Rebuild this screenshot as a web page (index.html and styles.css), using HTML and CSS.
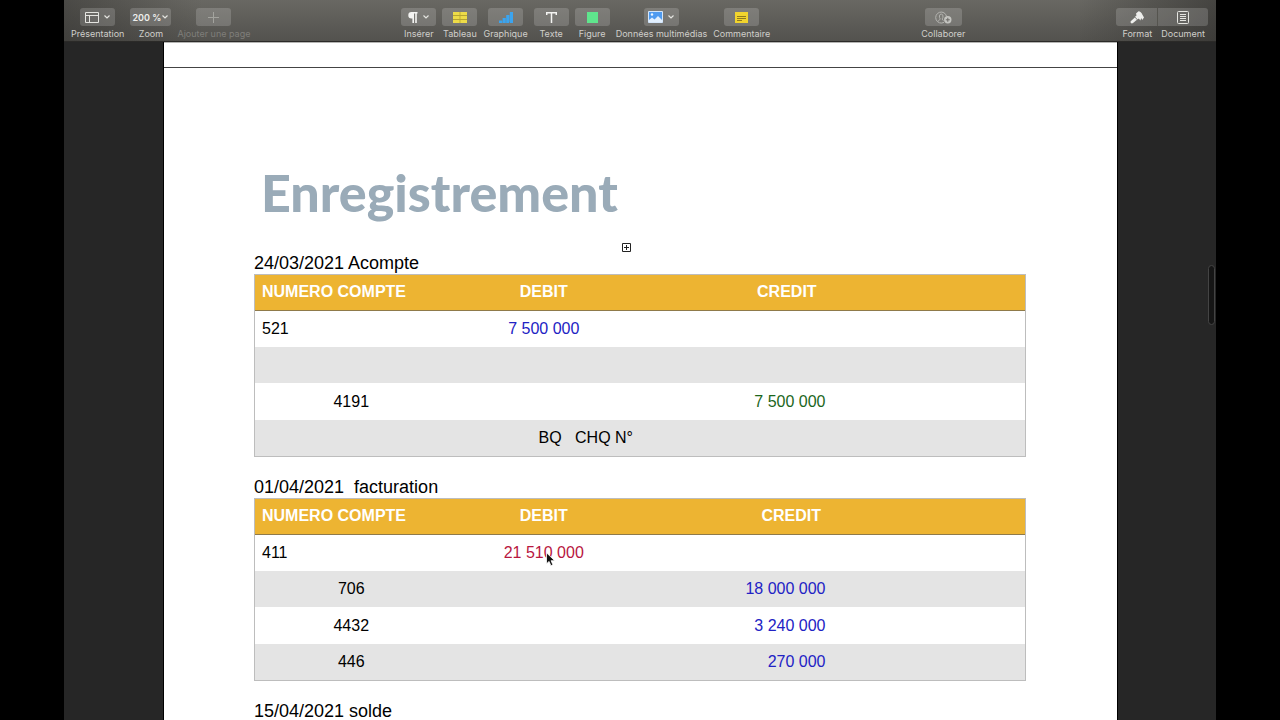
FILE: index.html
```html
<!DOCTYPE html>
<html lang="fr">
<head>
  <meta charset="UTF-8" />
  <meta name="viewport" content="width=device-width, initial-scale=1" />
  <title>Enregistrement</title>
  <link rel="stylesheet" href="styles.css">
</head>
<body>
  <div class="app">

    <!-- Toolbar -->
    <header class="toolbar">
      <div class="tool-group">
        <button class="tool" type="button">
          <span class="tool-box">
            <svg width="14" height="11" viewBox="0 0 14 11" fill="none" stroke="#e4e4e0"><path d="M.5.5h13v10H.5zM.5 3.5h13M4.500 3.500v7"/></svg>
            <svg class="chevron" width="6" height="4" viewBox="0 0 6 4"><path d="M.5.5 3 3 5.500.5"/></svg>
          </span>
          <span class="tool-label">Présentation</span>
        </button>
        <div class="tool">
          <span class="tool-box zoom-box">
            <select class="zoom-select" id="zoom"><option>200 %</option></select>
            <svg class="chevron zoom-chevron" width="6" height="4" viewBox="0 0 6 4"><path d="M.5.5 3 3 5.500.5"/></svg>
          </span>
          <label class="tool-label" for="zoom">Zoom</label>
        </div>
        <button class="tool is-disabled" type="button" disabled>
          <span class="tool-box">
            <svg width="11" height="11" viewBox="0 0 11 11" stroke="#a3a39e"><path d="M5.500 0v11M0 5.500h11"/></svg>
          </span>
          <span class="tool-label">Ajouter une page</span>
        </button>
      </div>

      <div class="tool-group">
        <button class="tool" type="button">
          <span class="tool-box">
            <svg width="10" height="11" viewBox="0 0 10 11"><path d="M3.500 0H9.500v1.400H8.800V11H7.200V1.400H6V11H4.400V6.400H3.500A3.200 3.200 0 0 1 3.500 0z" fill="#f4f4f2"/></svg>
            <svg class="chevron" width="6" height="4" viewBox="0 0 6 4"><path d="M.5.5 3 3 5.500.5"/></svg>
          </span>
          <span class="tool-label">Insérer</span>
        </button>
        <button class="tool" type="button">
          <span class="tool-box">
            <svg width="14" height="11" viewBox="0 0 14 11"><path d="M0 0h14v11H0z" fill="#b5a431"/><path d="M0 0h6.600v3H0zM7.400 0H14v3H7.400zM0 4h6.600v3H0zM7.400 4H14v3H7.400zM0 8h6.600v3H0zM7.400 8H14v3H7.400z" fill="#eddb48"/></svg>
          </span>
          <span class="tool-label">Tableau</span>
        </button>
        <button class="tool" type="button">
          <span class="tool-box">
            <svg width="14" height="11" viewBox="0 0 14 11" fill="#3ba4ef"><path d="M0 8.500h3.200V11H0zM3.600 6h3.200v5H3.600zM7.200 3h3.200v8H7.200zM10.800 0H14v11h-3.200z"/></svg>
          </span>
          <span class="tool-label">Graphique</span>
        </button>
        <button class="tool" type="button">
          <span class="tool-box">
            <svg width="11" height="11" viewBox="0 0 11 11" fill="none" stroke="#f4f4f2" stroke-width="1.500"><path d="M.7 3V.8h9.600V3M5.500.8V11"/></svg>
          </span>
          <span class="tool-label">Texte</span>
        </button>
        <button class="tool" type="button">
          <span class="tool-box">
            <svg width="11" height="11" viewBox="0 0 11 11"><path d="M0 0h11v11H0z" fill="#5fe58d"/></svg>
          </span>
          <span class="tool-label">Figure</span>
        </button>
        <button class="tool" type="button">
          <span class="tool-box">
            <svg width="15" height="12" viewBox="0 0 15 12"><path d="M.5.5h14v11H.5z" fill="#4f9bf0" stroke="#d4e6fa"/><circle cx="4" cy="3.500" r="1.200" fill="#eef6ff"/><path d="M1 11V9l3-2.500L6.500 8.500 10 5l4 4v2z" fill="#e2effd"/></svg>
            <svg class="chevron" width="6" height="4" viewBox="0 0 6 4"><path d="M.5.5 3 3 5.500.5"/></svg>
          </span>
          <span class="tool-label">Données multimédias</span>
        </button>
        <button class="tool" type="button">
          <span class="tool-box">
            <svg width="13" height="11" viewBox="0 0 13 11"><path d="M0 0h13v11H0z" fill="#f2d42d"/><path d="M2 4.500h9M2 6.500h9M2 8.500h5" stroke="#8f7a1e"/></svg>
          </span>
          <span class="tool-label">Commentaire</span>
        </button>
      </div>

      <div class="tool-group">
        <button class="tool" type="button">
          <span class="tool-box collab-box">
            <svg width="17" height="13" viewBox="0 0 17 13" fill="none" stroke="#b4b4b0"><path d="M9 11.300A5.500 5.500 0 1 1 11.600 5.500"/><path d="M3 10.500c.3-1.500 2.200-1.300 2.200-2.600C4 6.500 4 3 6.200 3s2.200 3.500 1 4.900c0 1 .6 1.300 1.300 1.600"/><circle cx="12.800" cy="8.800" r="3.700" fill="#c4c4c0" stroke="none"/><path d="M12.800 6.800v4M10.800 8.800h4" stroke="#6b6a66"/></svg>
          </span>
          <span class="tool-label">Collaborer</span>
        </button>
      </div>

      <div class="tool-group segmented">
        <button class="tool" type="button">
          <span class="tool-box">
            <svg width="14" height="13" viewBox="0 0 14 13" fill="#eeeeec"><path d="M6 2.500 8.500.3c1.500 0 3.200 1.500 3.800 3.200L14 6.500 12.200 9l-1-2-.8 2.500L8.800 7.600 7.600 8.500 5 5.700 6.500 4.500z"/><path d="M4.800 6.500 7 8.800 3 12c-1.600 1.200-3.300-.6-2-2z"/></svg>
          </span>
          <span class="tool-label">Format</span>
        </button>
        <button class="tool" type="button">
          <span class="tool-box">
            <svg width="12" height="13" viewBox="0 0 12 13" fill="none" stroke="#e4e4e0"><rect x=".5" y=".5" width="11" height="12" rx="1"/><path d="M3 3.500h6M3 5.500h6M3 7.500h6M3 9.500h6"/></svg>
          </span>
          <span class="tool-label">Document</span>
        </button>
      </div>
    </header>

    <!-- Document -->
    <main class="canvas">
      <div class="sheet">
        <div class="sheet-end"></div>
        <article class="sheet-body">
          <h1>Enregistrement</h1>

          <section class="entry">
            <svg class="anchor" width="9" height="9" viewBox="0 0 9 9" fill="none" stroke="#222"><path d="M.5.5h8v8h-8zM4.500 2v5M2 4.500h5"/></svg>
            <h2>24/03/2021 Acompte</h2>
            <table>
              <thead>
                <tr><th>NUMERO COMPTE</th><th class="center">DEBIT</th><th class="right">CREDIT&nbsp;&nbsp;</th><th></th></tr>
              </thead>
              <tbody>
                <tr><td>521</td><td class="center blue">7 500 000</td><td></td><td></td></tr>
                <tr><td></td><td></td><td></td><td></td></tr>
                <tr><td class="center">4191</td><td></td><td class="right green">7 500 000</td><td></td></tr>
                <tr><td></td><td class="right">BQ &nbsp; CHQ N°</td><td></td><td></td></tr>
              </tbody>
            </table>
          </section>

          <section class="entry">
            <h2>01/04/2021 &nbsp;facturation</h2>
            <table>
              <thead>
                <tr><th>NUMERO COMPTE</th><th class="center">DEBIT</th><th class="right">CREDIT&nbsp;</th><th></th></tr>
              </thead>
              <tbody>
                <tr><td>411</td><td class="center red">21 510 000</td><td></td><td></td></tr>
                <tr><td class="center">706</td><td></td><td class="right blue">18 000 000</td><td></td></tr>
                <tr><td class="center">4432</td><td></td><td class="right blue">3 240 000</td><td></td></tr>
                <tr><td class="center">446</td><td></td><td class="right blue">270 000</td><td></td></tr>
              </tbody>
            </table>
          </section>

          <section class="entry">
            <h2>15/04/2021 solde</h2>
          </section>
        </article>
      </div>
      <div class="scroll-thumb"></div>
    </main>
  </div>

  <svg class="cursor" width="10" height="15" viewBox="0 0 10 15"><path d="M.5.800v11l2.600-2.400 1.800 4.300 2-.9-1.800-4.100h3.600z" fill="#111" stroke="#fff" stroke-width=".8"/></svg>
</body>
</html>
```

FILE: styles.css
```css
*, *::before, *::after {
  box-sizing: border-box;
}
body {
  margin: 0;
  height: 100vh;
  overflow: hidden;
  background: #000;
  color: #000;
  font-family: "Liberation Sans", Arial, sans-serif;
}
.app {
  display: flex;
  flex-direction: column;
  height: 100vh;
  margin: 0 5%;
}

/* Toolbar */
.toolbar {
  display: flex;
  justify-content: space-between;
  height: 42px;
  flex-shrink: 0;
  padding: 8px 8px 0 7px;
  border-bottom: 1px solid #2b2a28;
  background:
    linear-gradient(90deg, rgba(45, 44, 42, 0.5), transparent 12%, transparent 88%, rgba(45, 44, 42, 0.6)),
    linear-gradient(#696863, #53524e);
}
.tool-group {
  display: flex;
  align-items: flex-start;
  gap: 6px;
}
.tool {
  display: flex;
  flex-direction: column;
  align-items: center;
  gap: 2px;
  padding: 0;
  border: none;
  background: none;
  color: #d0cfcb;
  font-family: Inter, sans-serif;
  font-size: 9px;
  font-weight: 400;
}
.tool-box {
  display: flex;
  align-items: center;
  justify-content: center;
  gap: 5px;
  min-width: 35px;
  height: 18px;
  border-radius: 3px;
  background: rgba(255, 255, 255, 0.17);
}
.tool-label {
  line-height: 12px;
  white-space: nowrap;
}
.chevron {
  fill: none;
  stroke: #e4e4e0;
  stroke-width: 1.2;
}
.zoom-box {
  position: relative;
  width: 41px;
}
.zoom-select {
  width: 100%;
  height: 18px;
  padding: 0;
  border: none;
  appearance: none;
  background: none;
  color: #eeeeec;
  font: 600 9px Inter, sans-serif;
  text-indent: 2px;
}
.zoom-chevron {
  position: absolute;
  right: 3px;
  top: 7px;
}
.collab-box {
  min-width: 37px;
}
.is-disabled {
  color: #7f7e7a;
}
.segmented {
  gap: 0;
}
.segmented .tool {
  align-items: stretch;
}
.segmented .tool-label {
  padding: 0 3px;
  text-align: center;
}
.segmented .tool:first-child .tool-label {
  padding: 0 6px;
}
.segmented .tool:first-child .tool-box {
  border-radius: 3px 0 0 3px;
  border-right: 1px solid #55544f;
}
.segmented .tool:last-child .tool-box {
  border-radius: 0 3px 3px 0;
}

/* Document */
.canvas {
  position: relative;
  flex: 1;
  min-height: 0;
  padding: 0 98px 0 99px;
  background: #262626;
}
.sheet {
  height: 100%;
  overflow: hidden;
  border: solid #000;
  border-width: 0 1px;
  background: #fff;
}
.sheet-end {
  height: 26px;
  border-top: 1px solid #b5b5b3;
  border-bottom: 1px solid #444;
}
.sheet-body {
  padding: 92px 91px 0 90px;
}
h1 {
  margin: 0 0 28px 7px;
  color: #9aabb8;
  font-family: Lato, sans-serif;
  font-size: 52px;
  font-weight: 900;
  line-height: 64px;
}
.entry {
  position: relative;
  margin-bottom: 19px;
}
h2 {
  margin: 0;
  font-size: 18px;
  font-weight: 400;
  line-height: 22px;
}
table {
  width: 100%;
  table-layout: fixed;
  border: 1px solid #bdbdbd;
  border-spacing: 0;
}
th, td {
  height: 36px;
  padding: 0 7px;
  font-size: 16px;
  line-height: 20px;
  text-align: left;
}
th {
  padding-bottom: 2px;
  background: #edb432;
  border-bottom: 1px solid #8f7a4a;
  color: #fff;
}
tbody tr:nth-child(even) {
  background: #e4e4e4;
}
tbody tr:nth-child(3) td {
  height: 37px;
}
.center {
  text-align: center;
}
.right {
  text-align: right;
}
.blue {
  color: #2222c4;
}
.green {
  color: #1c661c;
}
.red {
  color: #b8173f;
}
.anchor {
  position: absolute;
  left: 368px;
  top: -9px;
}
.scroll-thumb {
  position: absolute;
  right: 1px;
  top: 223px;
  width: 7px;
  height: 60px;
  border: 1px solid #444;
  border-radius: 4px;
  background: #161616;
}
.cursor {
  position: absolute;
  left: 546px;
  top: 552px;
}
```
